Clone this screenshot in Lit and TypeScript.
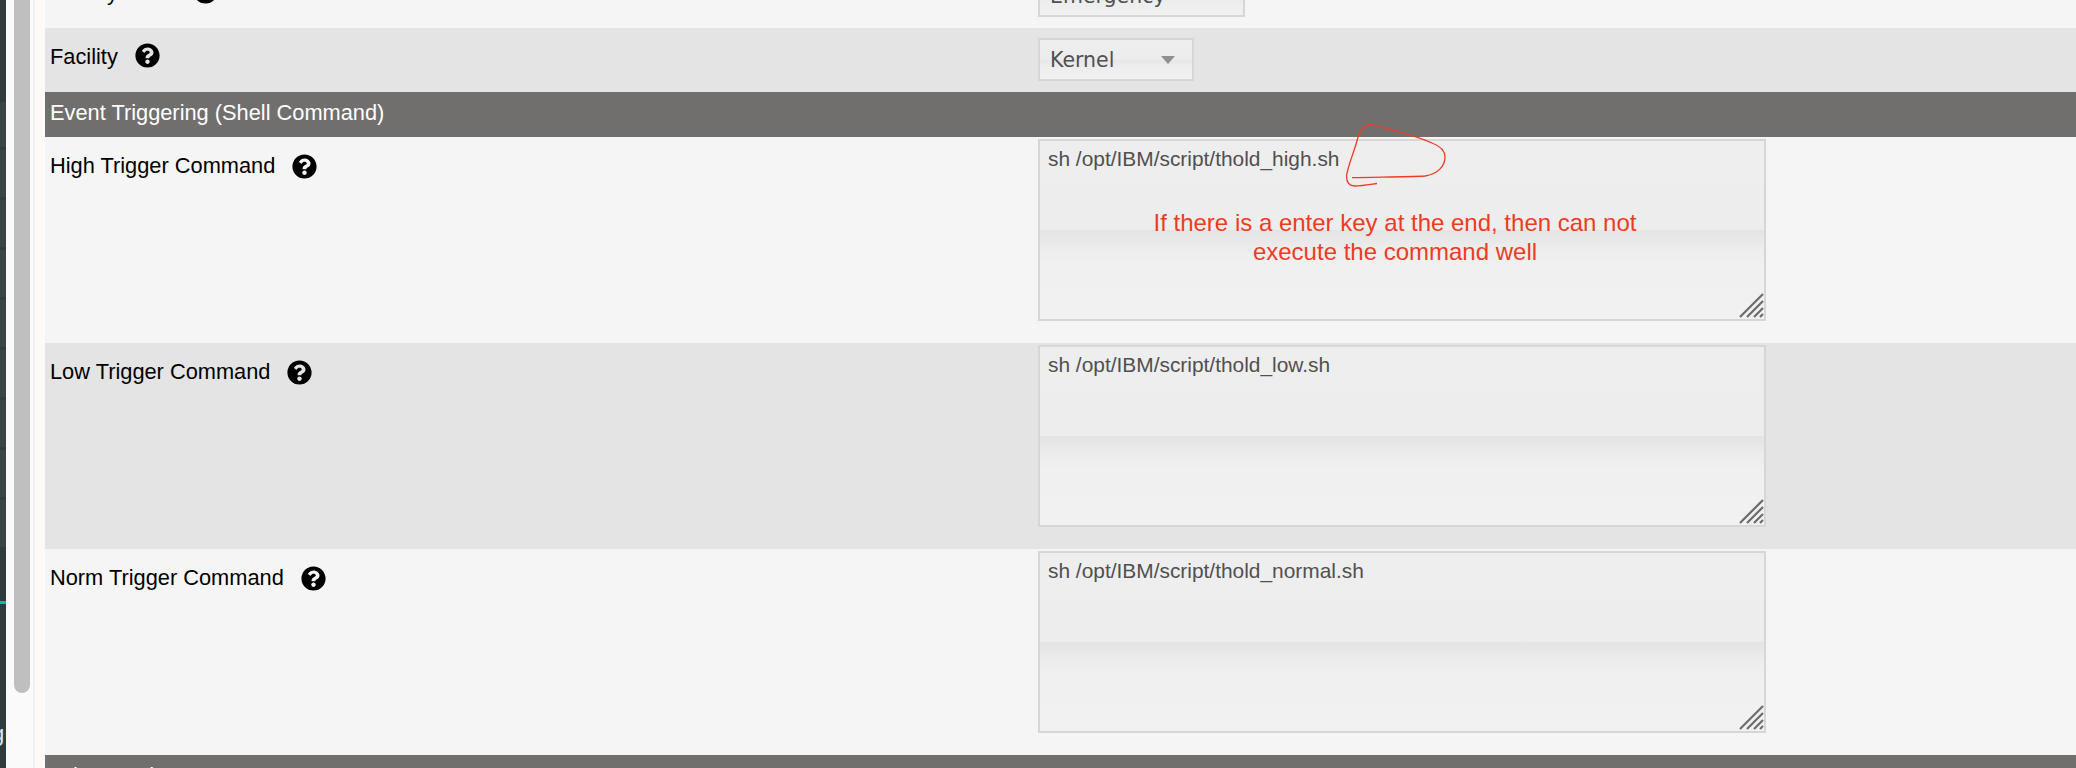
import { LitElement, html, css, svg } from "lit";
import { customElement } from "lit/decorators.js";

const helpPath =
  "M504 256c0 136.997-111.043 248-248 248S8 392.997 8 256C8 119.083 119.043 8 256 8s248 111.083 248 248zM262.655 90c-54.497 0-89.255 22.957-116.549 63.758-3.536 5.286-2.353 12.415 2.715 16.258l34.699 26.31c5.205 3.947 12.621 3.008 16.665-2.122 17.864-22.658 30.113-35.797 57.303-35.797 20.429 0 45.698 13.148 45.698 32.958 0 14.976-12.363 22.667-32.534 33.976C247.128 238.528 216 254.941 216 296v4c0 6.627 5.373 12 12 12h56c6.627 0 12-5.373 12-12v-1.333c0-28.462 83.186-29.647 83.186-106.667 0-58.002-60.165-102-116.531-102zM256 338c-25.365 0-46 20.635-46 46 0 25.364 20.635 46 46 46s46-20.636 46-46c0-25.365-20.635-46-46-46z";

const help = html`<svg class="help" viewBox="0 0 512 512"><path d=${helpPath}></path></svg>`;

const grip = svg`<path d="M1 24 L24 1 M8 24 L24 8 M15 24 L24 15 M21 24 L24 21" stroke="#6c6c6c" stroke-width="2.2" fill="none"></path>`;

@customElement("app-root")
export class AppRoot extends LitElement {
  static styles = css`
    :host {
      display: block;
      width: 2076px;
      height: 768px;
      overflow: hidden;
      position: relative;
      font-family: "Liberation Sans", Arial, sans-serif;
      background: #fff;
    }
    .shell {
      display: flex;
      height: 768px;
      overflow: hidden;
    }
    .nav {
      width: 6px;
      flex: none;
      background: #2e3b3d;
      position: relative;
      overflow: hidden;
      display: flex;
      flex-direction: column;
      padding-top: 102px;
      box-sizing: border-box;
    }
    .nav-item {
      height: 47px;
      flex: none;
      background: #384446;
      border-bottom: 3px solid #303c3e;
    }
    .nav-item:first-child {
      height: 45px;
    }
    .nav-item:last-of-type {
      border-bottom: none;
      height: 49px;
    }
    .nav-line {
      position: absolute;
      left: 0;
      top: 601px;
      width: 6px;
      height: 3px;
      background: #17b39c;
    }
    .nav-g {
      position: absolute;
      left: -8px;
      top: 722px;
      color: #dfe5e5;
      font-size: 22px;
      line-height: 24px;
    }
    .track {
      width: 29px;
      flex: none;
      background: #fafafa;
      border-right: 2px solid #efefef;
      box-sizing: border-box;
      padding-left: 8px;
      display: flex;
      flex-direction: column;
    }
    .thumb {
      width: 16px;
      height: 693px;
      background: #bfbfbf;
      border-radius: 0 0 8px 8px;
    }
    .gutter {
      width: 10px;
      flex: none;
      background: #fff9f7;
    }
    .main {
      flex: 1;
      min-width: 0;
      display: flex;
      flex-direction: column;
      margin-top: -36px;
    }
    .row {
      display: flex;
      flex: none;
      background: #f5f5f5;
      color: #000;
      font-size: 21.8px;
      box-sizing: border-box;
    }
    .row.alt {
      background: #e4e4e4;
    }
    .label {
      width: 993px;
      flex: none;
      padding-left: 5px;
      box-sizing: border-box;
      display: flex;
      align-items: center;
      gap: 17px;
      white-space: nowrap;
    }
    .pick {
      height: 64px;
      padding-top: 10px;
    }
    .pick .label {
      height: 38px;
    }
    .pick .help {
      margin-top: -3px;
    }
    .cmd {
      height: 206px;
      padding-top: 2px;
    }
    .cmd .label {
      height: 54px;
    }
    .help {
      width: 25px;
      height: 25px;
      fill: #000;
      flex: none;
    }
    .section {
      height: 45px;
      flex: none;
      background: #716f6d;
      color: #fff;
      font-size: 21.8px;
      line-height: 41px;
      padding-left: 5px;
    }
    .select {
      box-sizing: border-box;
      border: 2px solid #d6d6d6;
      height: 43px;
      display: flex;
      align-items: center;
      justify-content: space-between;
      padding: 0 17px 0 10px;
      color: #505050;
      font-family: "DejaVu Sans", sans-serif;
      font-size: 20.5px;
      background: linear-gradient(#eeeeee 0%, #ececec 50%, #e6e6e6 50%, #eeeeee 70%, #f0f0f0 100%);
    }
    .select.kernel {
      width: 156px;
    }
    .select.emergency {
      width: 207px;
    }
    .arrow {
      width: 0;
      height: 0;
      border-left: 7px solid transparent;
      border-right: 7px solid transparent;
      border-top: 8px solid #8f8f8f;
    }
    .ta-wrap {
      position: relative;
      width: 728px;
      height: 182px;
      flex: none;
    }
    textarea {
      display: block;
      box-sizing: border-box;
      width: 100%;
      height: 100%;
      margin: 0;
      resize: none;
      border: 2px solid #d6d6d6;
      outline: none;
      padding: 5px 8px;
      color: #505050;
      font-family: "Liberation Sans", Arial, sans-serif;
      font-size: 20.9px;
      line-height: 26px;
      background: linear-gradient(#eeeeee 0%, #ededed 50%, #e4e4e4 50%, #e6e6e6 53%, #ececec 60%, #f0f0f0 68%, #f1f1f1 100%);
    }
    .grip {
      position: absolute;
      right: 2px;
      bottom: 3px;
      width: 25px;
      height: 25px;
    }
    .note {
      position: absolute;
      left: 1095px;
      top: 208px;
      width: 600px;
      text-align: center;
      color: #ee3b24;
      font-size: 24px;
      line-height: 29px;
    }
    .scribble {
      position: absolute;
      left: 1340px;
      top: 118px;
      width: 112px;
      height: 74px;
      overflow: visible;
    }
  `;

  private cmd(label: string, value: string, alt: boolean) {
    return html`<div class="row cmd ${alt ? "alt" : ""}">
      <div class="label"><span>${label}</span>${help}</div>
      <div class="ta-wrap">
        <textarea spellcheck="false" .value=${value}></textarea>
        <svg class="grip" viewBox="0 0 25 25">${grip}</svg>
      </div>
    </div>`;
  }

  render() {
    return html`<div class="shell">
        <div class="nav">
          ${[0, 1, 2, 3, 4, 5, 6, 7, 8].map(() => html`<div class="nav-item"></div>`)}
          <div class="nav-line"></div>
          <div class="nav-g">g</div>
        </div>
        <div class="track"><div class="thumb"></div></div>
        <div class="gutter"></div>
        <div class="main">
          <div class="row pick">
            <div class="label"><span>Priority Level</span>${help}</div>
            <div class="select emergency">Emergency</div>
          </div>
          <div class="row alt pick">
            <div class="label"><span>Facility</span>${help}</div>
            <div class="select kernel">Kernel<span class="arrow"></span></div>
          </div>
          <div class="section">Event Triggering (Shell Command)</div>
          ${this.cmd("High Trigger Command", "sh /opt/IBM/script/thold_high.sh", false)}
          ${this.cmd("Low Trigger Command", "sh /opt/IBM/script/thold_low.sh", true)}
          ${this.cmd("Norm Trigger Command", "sh /opt/IBM/script/thold_normal.sh", false)}
          <div class="section">Other Settings</div>
        </div>
      </div>
      <div class="note">If there is a enter key at the end, then can not<br />execute the command well</div>
      <svg class="scribble" viewBox="1340 118 112 74" fill="none" stroke="#ee3b24" stroke-width="1.3">
        <path d="M1352 177.7 C1375 177 1405 177 1425 176 C1438 174 1445 166 1445 157 C1445 150 1440 146 1432 143 C1412 134 1390 130 1372 124.5 C1366 124 1360 130 1358 137 C1355 150 1348 165 1346.5 176 C1346.5 183 1350 186 1355 186 C1362 186 1370 184.5 1377 183.5"></path>
      </svg>`;
  }
}
